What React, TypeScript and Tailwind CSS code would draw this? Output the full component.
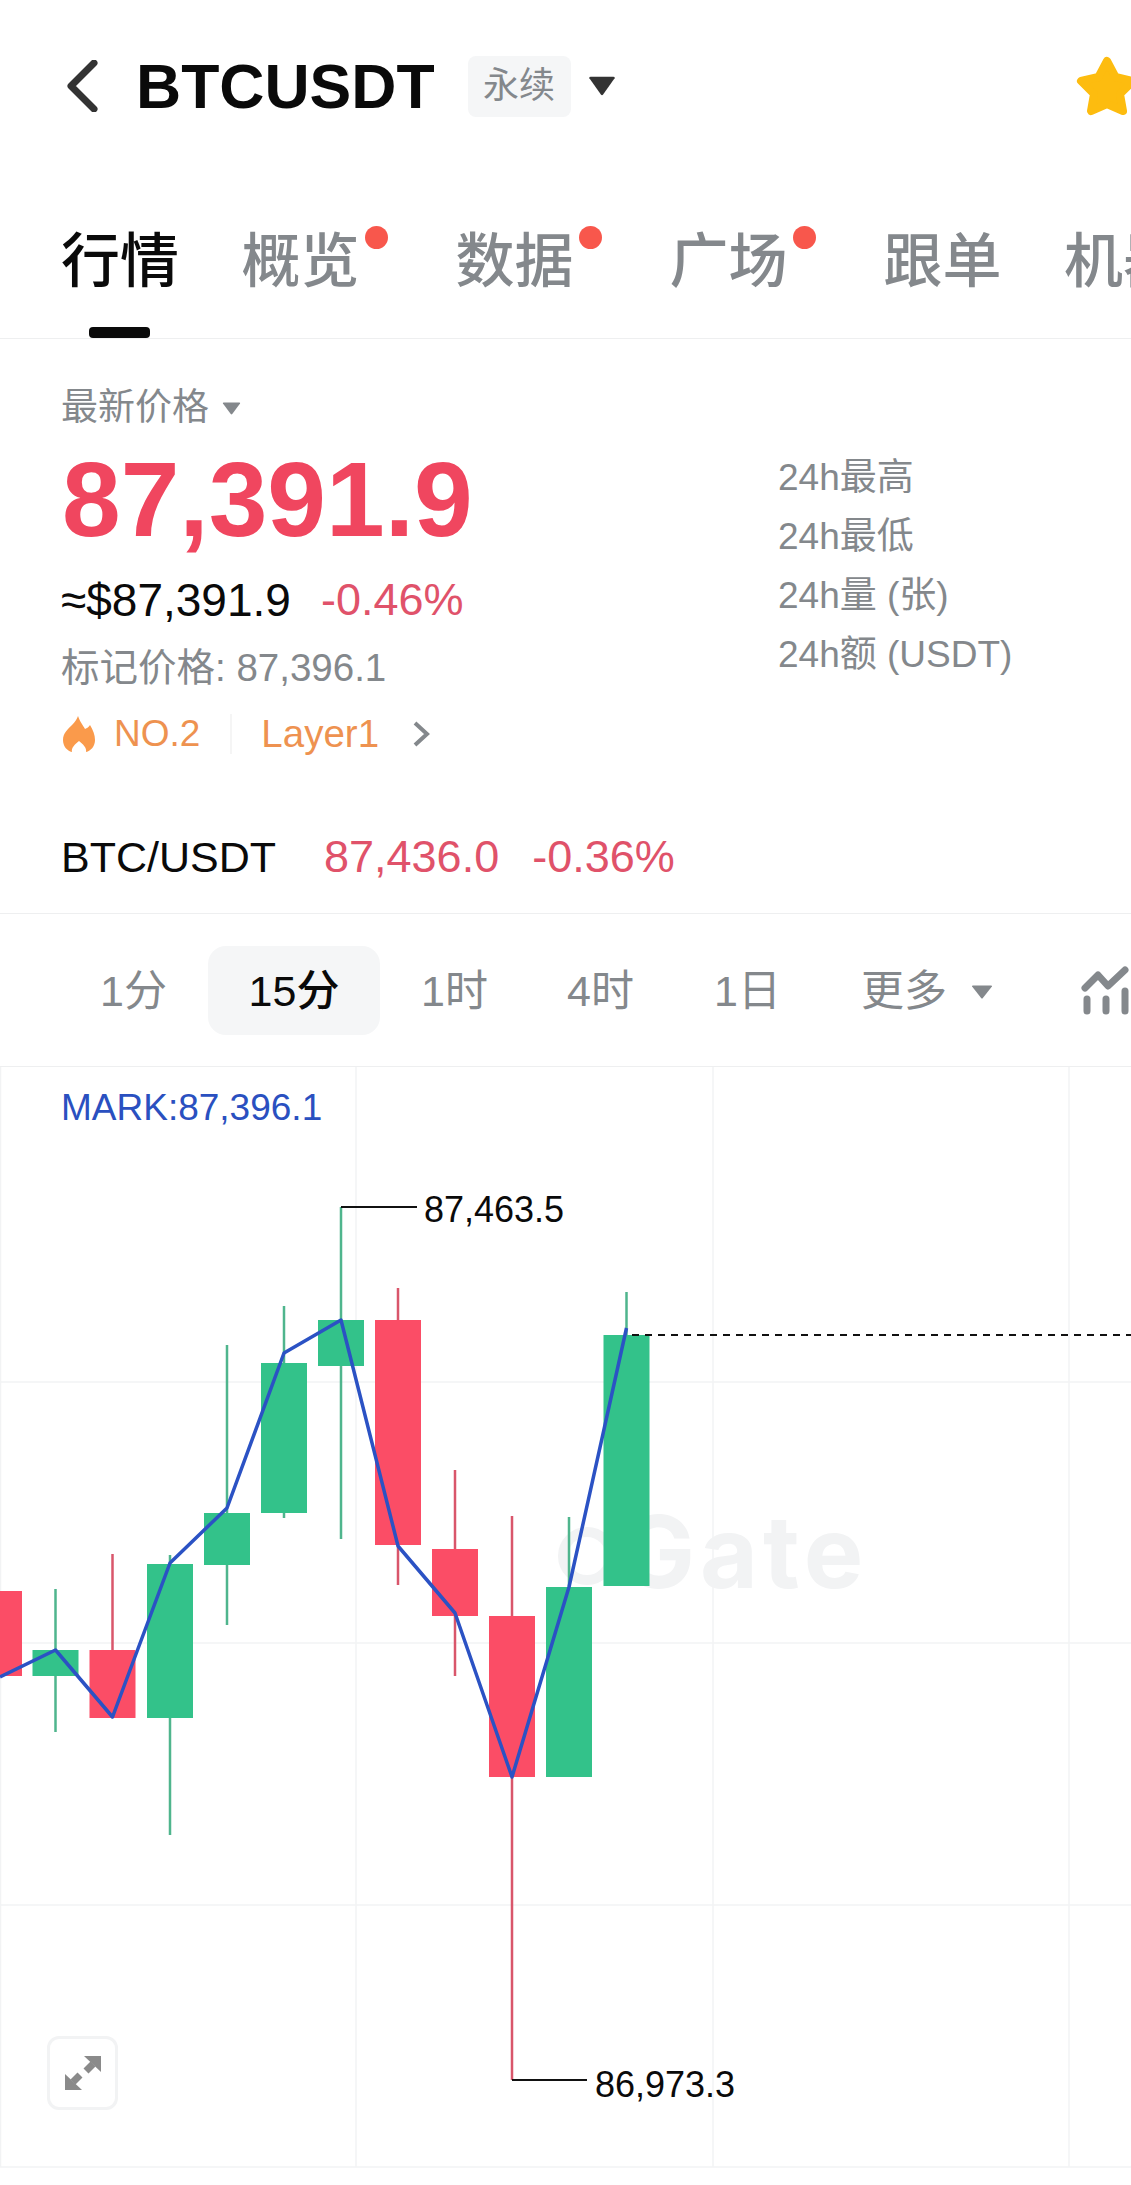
import React from "react";

type C = { x: number; t: number; b: number; wt: number; wb: number; up: boolean };
const GREEN = "#33c28a";
const RED = "#fb4d66";
const candles: C[] = [
  { x: -1, t: 1591, b: 1676, wt: 1591, wb: 1676, up: false },
  { x: 55.5, t: 1650, b: 1676, wt: 1589, wb: 1732, up: true },
  { x: 112.5, t: 1650, b: 1718, wt: 1554, wb: 1718, up: false },
  { x: 170, t: 1564, b: 1718, wt: 1555, wb: 1835, up: true },
  { x: 227, t: 1513, b: 1565, wt: 1345, wb: 1625, up: true },
  { x: 284, t: 1363, b: 1513, wt: 1306, wb: 1518, up: true },
  { x: 341, t: 1320, b: 1366, wt: 1207, wb: 1539, up: true },
  { x: 398, t: 1320, b: 1545, wt: 1288, wb: 1585, up: false },
  { x: 455, t: 1549, b: 1616, wt: 1470, wb: 1676, up: false },
  { x: 512, t: 1616, b: 1777, wt: 1516, wb: 2080, up: false },
  { x: 569, t: 1587, b: 1777, wt: 1517, wb: 1777, up: true },
  { x: 626.5, t: 1335, b: 1586, wt: 1292, wb: 1586, up: true },
];
const linePts =
  "0,1677 55.5,1650 112.5,1717 170,1563 227,1508 284,1353 341,1320 398,1546 455,1613 512,1777 569,1587 626.5,1328";

function Chart() {
  return (
    <svg className="absolute inset-0" width="1131" height="1118" viewBox="0 1067 1131 1118">
      {[1382, 1643, 1905, 2167].map((y) => (
        <line key={y} x1="0" x2="1131" y1={y} y2={y} stroke="#f2f3f4" strokeWidth="1.5" />
      ))}
      {[0.5, 356, 713, 1069].map((x) => (
        <line key={x} x1={x} x2={x} y1="1067" y2="2167" stroke="#f2f3f4" strokeWidth="1.5" />
      ))}
      <circle cx="587" cy="1556" r="24" fill="none" stroke="#f2f3f4" strokeWidth="10" />
      <text
        x="620"
        y="1588"
        fill="#f2f3f4"
        fontSize="100"
        fontWeight="700"
        letterSpacing="5"
        fontFamily="Inter, sans-serif"
      >
        Gate
      </text>
      {candles.map((c) => {
        const col = c.up ? GREEN : RED;
        const wick = c.up ? "#4fb58d" : "#d9566b";
        return (
          <g key={c.x}>
            <line x1={c.x} x2={c.x} y1={c.wt} y2={c.wb} stroke={wick} strokeWidth="2.5" />
            <rect x={c.x - 23} y={c.t} width="46" height={c.b - c.t} fill={col} />
          </g>
        );
      })}
      <polyline points={linePts} fill="none" stroke="#2b52c4" strokeWidth="3.5" strokeLinejoin="round" />
      <line x1="632" x2="1131" y1="1335" y2="1335" stroke="#111" strokeWidth="2" strokeDasharray="7 6" />
      <line x1="341" x2="417" y1="1207" y2="1207" stroke="#111" strokeWidth="2" />
      <line x1="512" x2="587" y1="2080" y2="2080" stroke="#111" strokeWidth="2" />
    </svg>
  );
}

function Tri({ w, h, color }: { w: number; h: number; color: string }) {
  return (
    <svg width={w} height={h} viewBox="0 0 20 14" preserveAspectRatio="none" className="shrink-0">
      <path d="M1 1.5 Q0.5 0.5 2 0.5 H18 Q19.5 0.5 19 1.5 L10.8 13 Q10 14 9.2 13 Z" fill={color} />
    </svg>
  );
}

function Tab({ label, active, dot }: { label: string; active?: boolean; dot?: boolean }) {
  return (
    <div className="flex shrink-0 items-start">
      <span
        className={
          "whitespace-nowrap text-[59px] leading-[72px] font-medium " +
          (active ? "text-[#0a0a0a]" : "text-[#84888c]")
        }
      >
        {label}
      </span>
      {dot && <span className="mr-[5.5px] ml-[5px] size-[23px] shrink-0 rounded-full bg-[#f8574c]" />}
    </div>
  );
}

const stats = ["24h最高", "24h最低", "24h量 (张)", "24h额 (USDT)"];

export default function App() {
  return (
    <div className="h-[2185px] w-[1131px] overflow-hidden bg-white [font-family:'Liberation_Sans','Noto_Sans_CJK_SC',sans-serif]">
      {/* header */}
      <header className="flex h-[172px] items-center pl-[66px]">
        <svg width="32" height="52" viewBox="0 0 32 52" className="shrink-0">
          <path d="M28 3 L5 26 L28 49" fill="none" stroke="#333" strokeWidth="7" strokeLinecap="round" strokeLinejoin="round" />
        </svg>
        <h1 className="ml-[38px] text-[62.5px] leading-none font-bold text-[#0a0a0a]">BTCUSDT</h1>
        <span className="ml-[33px] flex h-[61px] w-[103px] items-center justify-center rounded-[8px] bg-[#f5f6f7] text-[36px] text-[#84888c]">
          永续
        </span>
        <span className="ml-[17px]">
          <Tri w={28} h={20} color="#333333" />
        </span>
        <svg width="70" height="66" viewBox="0 0 70 66" className="mr-[-11px] ml-auto shrink-0">
          <path
            d="M35 8 L43.5 24 L61 28 L48 41 L51 58 L35 51 L19 58 L22 41 L9 28 L26.5 24 Z"
            fill="#fdbc0f"
            stroke="#fdbc0f"
            strokeWidth="8"
            strokeLinejoin="round"
          />
        </svg>
      </header>

      {/* tabs */}
      <nav className="relative flex h-[167px] items-start gap-[62.5px] border-b border-[#eeeff0] pt-[54px] pl-[61px]">
        <Tab label="行情" active />
        <Tab label="概览" dot />
        <Tab label="数据" dot />
        <Tab label="广场" dot />
        <Tab label="跟单" />
        <Tab label="机器人" />
        <span className="absolute bottom-0 left-[89px] h-[11px] w-[61px] rounded-[4px] bg-[#0a0a0a]" />
      </nav>

      {/* info */}
      <section className="flex h-[575px] border-b border-[#eeeff0] pl-[61px]">
        <div className="w-[717px] shrink-0">
          <div className="mt-[47px] flex h-[44px] items-center text-[37px] leading-[44px] text-[#84888c]">
            最新价格
            <span className="ml-[13px]">
              <Tri w={19} h={13} color="#84888c" />
            </span>
          </div>
          <div className="mt-[14px] pl-[1px] text-[105.5px] leading-[110px] font-bold text-[#f0465f]">87,391.9</div>
          <div className="mt-[21px] flex h-[50px] items-center leading-[50px] text-[#0a0a0a]">
            <span className="text-[46px]">≈$87,391.9</span>
            <span className="ml-[30px] text-[45px] text-[#e0526a]">-0.46%</span>
          </div>
          <div className="mt-[21px] h-[44px] text-[38.5px] leading-[44px] text-[#84888c]">标记价格: 87,396.1</div>
          <div className="mt-[22px] flex h-[44px] items-center pl-[2px] text-[37px] leading-[44px] text-[#ee9250]">
            <svg width="32" height="36" viewBox="0 0 32 36" className="shrink-0">
              <path
                d="M15 0 C17 6 20 9 22 13 C24 12 26 11 27 9 C30 14 32 19 32 24 C32 30 28 35 23 36 C24 32 20 28 16 25 C12 28 8 32 9 36 C4 35 0 30 0 24 C0 17 5 13 9 9 C12 6 14 3 15 0 Z"
                fill="#fa9a4b"
              />
            </svg>
            <span className="ml-[19px]">NO.2</span>
            <span className="mr-[29px] ml-[30px] h-[40px] w-[2px] bg-[#f5f5f5]" />
            <span className="text-[38.5px]">Layer1</span>
            <svg width="22" height="28" viewBox="0 0 22 28" className="ml-[32px] shrink-0">
              <path d="M4 3 L16 14 L4 25" fill="none" stroke="#84888c" strokeWidth="4" strokeLinejoin="miter" />
            </svg>
          </div>
          <div className="mt-[76px] flex h-[50px] items-center text-[45px] leading-[50px] text-[#e0526a]">
            <span className="text-[43px] text-[#0a0a0a]">BTC/USDT</span>
            <span className="ml-[48px]">87,436.0</span>
            <span className="ml-[33px]">-0.36%</span>
          </div>
        </div>
        <div className="mt-[117px] flex flex-col gap-[15px] text-[37px] leading-[44px] text-[#84888c]">
          {stats.map((s) => (
            <div key={s} className="whitespace-nowrap">
              {s}
            </div>
          ))}
        </div>
      </section>

      {/* timeframes */}
      <div className="flex h-[153px] items-center border-b border-[#eeeff0] whitespace-nowrap text-[43px] text-[#84888c]">
        <span className="ml-[100px] w-[108px] pt-[3px]">1分</span>
        <span className="flex h-[89px] w-[172px] items-center justify-center rounded-[18px] bg-[#f5f6f7] pt-[3px] font-medium text-[#0a0a0a]">15分</span>
        <span className="ml-[41px] w-[146px] pt-[3px]">1时</span>
        <span className="w-[147px] pt-[3px]">4时</span>
        <span className="w-[147px] pt-[3px]">1日</span>
        <span className="flex items-center pt-[3px]">
          更多
          <span className="ml-[24px]">
            <Tri w={22} h={14} color="#84888c" />
          </span>
        </span>
        <svg width="50" height="52" viewBox="0 0 50 52" className="ml-[88px] shrink-0">
          <path d="M4 24 L17 11 L27 22 L44 6" fill="none" stroke="#84888c" strokeWidth="7" strokeLinejoin="round" strokeLinecap="round" />
          <path d="M6 35 V47 M25 35 V47 M44 27 V47" fill="none" stroke="#84888c" strokeWidth="7" strokeLinecap="round" />
        </svg>
      </div>

      {/* chart */}
      <div className="relative h-[1118px] w-full">
        <Chart />
        <div className="absolute top-[21px] left-[61px] text-[37px] leading-[40px] text-[#2a50c0]">MARK:87,396.1</div>
        <div className="absolute top-[123px] left-[424px] text-[36px] leading-[40px] text-[#0a0a0a]">87,463.5</div>
        <div className="absolute top-[998px] left-[595px] text-[36px] leading-[40px] text-[#0a0a0a]">86,973.3</div>
        <div className="absolute top-[969px] left-[47px] flex h-[74px] w-[71px] items-center justify-center rounded-[12px] border-[3px] border-[#f2f3f4] bg-white">
          <svg width="36" height="34" viewBox="0 0 36 34">
            <path d="M19 0 H36 V16 Z" fill="#8a8a8a" />
            <path d="M28 8 L21 15" stroke="#8a8a8a" strokeWidth="7" />
            <path d="M17 34 H0 V18 Z" fill="#8a8a8a" />
            <path d="M8 26 L15 19" stroke="#8a8a8a" strokeWidth="7" />
          </svg>
        </div>
      </div>
    </div>
  );
}
